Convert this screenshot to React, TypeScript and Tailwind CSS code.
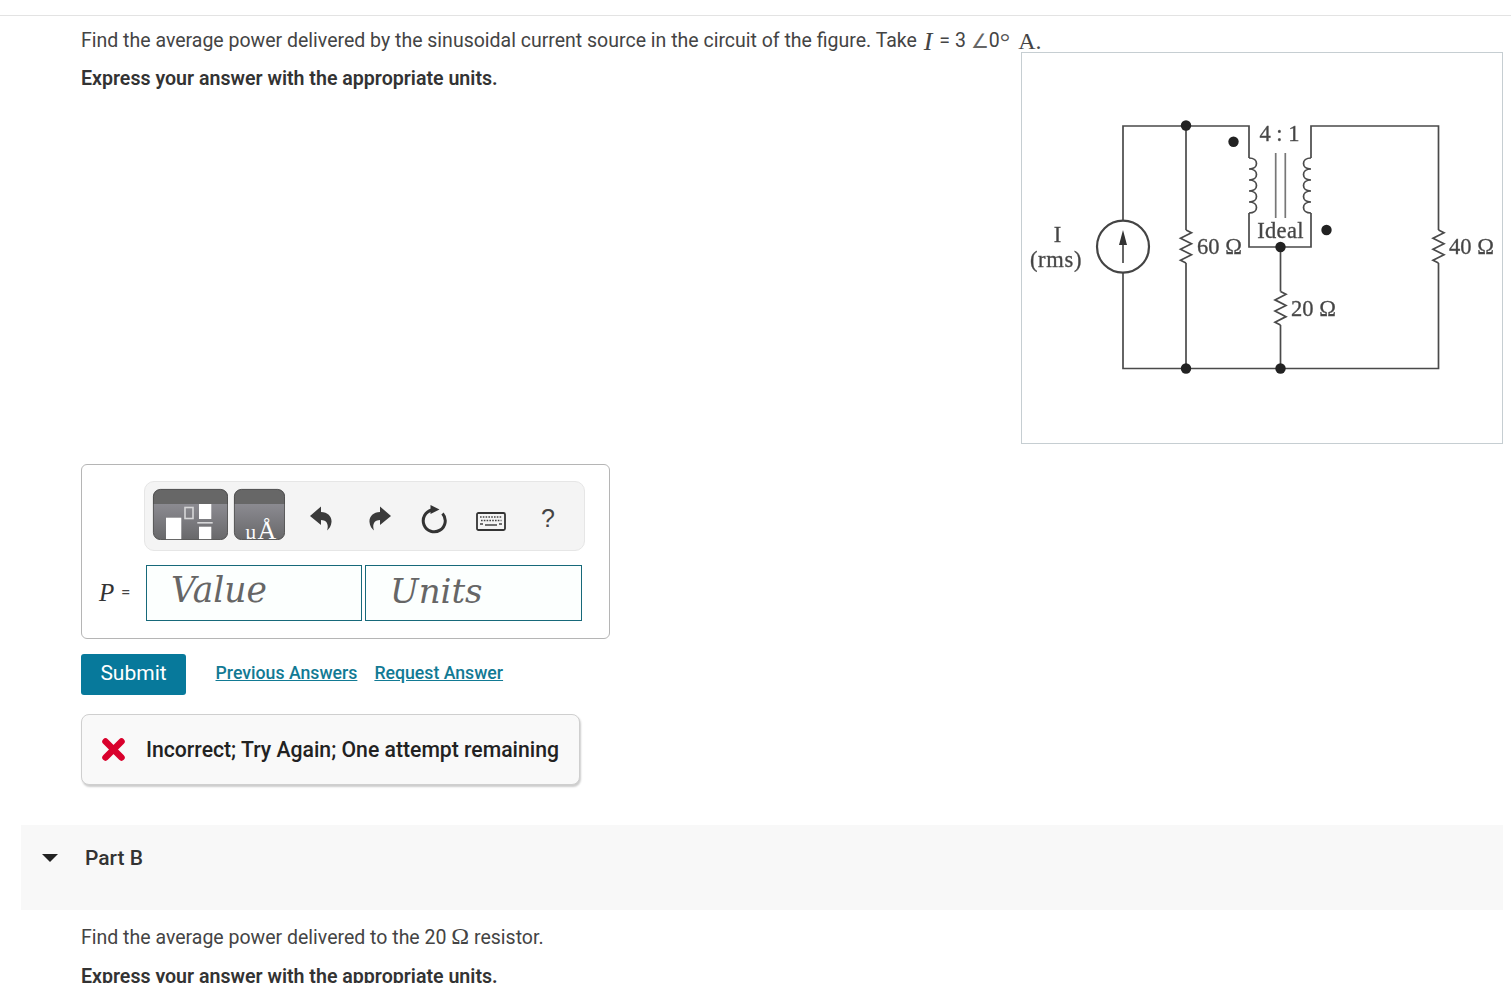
import React from "react";

const roboto = { fontFamily: "Roboto, 'Liberation Sans', sans-serif" };

function coil(x: number, dir: number) {
  const n = 5;
  const top = 158;
  const step = 55 / n;
  let d = `M${x} ${top}`;
  for (let i = 0; i < n; i++) {
    d += ` C${x + dir * 10} ${top + i * step} ${x + dir * 10} ${top + (i + 1) * step} ${x} ${top + (i + 1) * step}`;
  }
  return d;
}

function resistor(x: number, y: number, h: number) {
  const s = h / 6;
  const a = 5.5;
  return `M${x} ${y} L${x + a} ${y + s * 0.5} L${x - a} ${y + s * 1.5} L${x + a} ${y + s * 2.5} L${x - a} ${y + s * 3.5} L${x + a} ${y + s * 4.5} L${x - a} ${y + s * 5.5} L${x} ${y + h}`;
}

function Circuit() {
  const serif = "'Liberation Serif', serif";
  const text = { fontFamily: serif, fontSize: 22.5, fill: "#444", stroke: "#555", strokeWidth: 0.35 };
  return (
    <svg viewBox="1022 53 480 390" className="block w-full h-full blur-[0.4px]">
      <g fill="none" stroke="#4a4a4a" strokeWidth="1.7">
        <path d="M1123 220 V126 H1249 V158" />
        <path d="M1123 273 V368.5 H1438.5 V263" />
        <path d="M1438.5 230 V126 H1311 V158" />
        <path d="M1186 126 V230" />
        <path d="M1186 263 V368.5" />
        <path d={resistor(1186, 230, 33)} />
        <path d={resistor(1438.5, 230, 33)} />
        <path d="M1280.5 247 V291.5" />
        <path d={resistor(1280.5, 291.5, 33.5)} />
        <path d="M1280.5 325 V368.5" />
        <path d={coil(1249, 1)} />
        <path d={coil(1311, -1)} />
        <path d="M1249 213 V247 H1311 V213" />
        <path d="M1275.7 153 V218 M1285.3 153 V218" stroke="#777" />
        <circle cx="1123" cy="246.7" r="26" strokeWidth="2.2" stroke="#444" />
        <path d="M1123 263 V240" />
      </g>
      <path d="M1123 230 L1127 245 H1119 Z" fill="#333" />
      <g fill="#222">
        <circle cx="1186" cy="125.5" r="5.2" />
        <circle cx="1186" cy="368.5" r="5.2" />
        <circle cx="1280.5" cy="368.5" r="5.2" />
        <circle cx="1280.5" cy="247" r="5.2" />
        <circle cx="1233.5" cy="141.7" r="5.2" />
        <circle cx="1326.5" cy="230" r="5.2" />
      </g>
      <g style={text}>
        <text x="1279.5" y="141" textAnchor="middle">4 : 1</text>
        <text x="1280.5" y="238" textAnchor="middle" letterSpacing="0.3">Ideal</text>
        <text x="1057.5" y="241.5" textAnchor="middle">I</text>
        <text x="1056" y="267" textAnchor="middle" letterSpacing="0.7">(rms)</text>
        <text x="1197" y="254">60 Ω</text>
        <text x="1291" y="316">20 Ω</text>
        <text x="1449" y="254">40 Ω</text>
      </g>
    </svg>
  );
}

function TemplateButton() {
  return (
    <svg width="76" height="52" viewBox="152 488 76 52" className="block">
      <defs>
        <linearGradient id="b1" x1="0" y1="0" x2="0" y2="1">
          <stop offset="0" stopColor="#9a99a1" />
          <stop offset="1" stopColor="#68686a" />
        </linearGradient>
        <clipPath id="c1">
          <rect x="153.4" y="489.4" width="74.2" height="50.2" rx="7" />
        </clipPath>
      </defs>
      <g clipPath="url(#c1)">
        <rect x="153" y="489" width="75" height="51" fill="url(#b1)" />
        <rect x="153" y="489" width="75" height="15" fill="#676767" />
        <rect x="166" y="517.7" width="15.3" height="23" fill="#fff" />
        <rect x="185" y="507.5" width="8" height="11" fill="none" stroke="#d6d6d8" strokeWidth="1.6" />
        <rect x="199" y="504" width="12.3" height="15" fill="#fff" />
        <rect x="197.3" y="522" width="15.4" height="1.6" fill="#d6d6d8" />
        <rect x="199" y="526.7" width="12.3" height="14" fill="#fff" />
      </g>
      <rect x="153.4" y="489.4" width="74.2" height="50.2" rx="7" fill="none" stroke="#3b3b3b" strokeWidth="0.8" />
    </svg>
  );
}

function UnitsButton() {
  return (
    <svg width="52" height="52" viewBox="233 488 52 52" className="block">
      <defs>
        <linearGradient id="b2" x1="0" y1="0" x2="0" y2="1">
          <stop offset="0" stopColor="#9a99a1" />
          <stop offset="1" stopColor="#68686a" />
        </linearGradient>
        <clipPath id="c2">
          <rect x="234.4" y="489.4" width="50.2" height="50.2" rx="7" />
        </clipPath>
      </defs>
      <g clipPath="url(#c2)">
        <rect x="234" y="489" width="51" height="51" fill="url(#b2)" />
        <rect x="234" y="489" width="51" height="15" fill="#676767" />
        <text x="245" y="539" fill="#fff" fontSize="20" fontFamily="'Liberation Serif', serif">µ</text>
        <text x="257.5" y="539" fill="#fff" fontSize="26" fontFamily="'Liberation Serif', serif">Å</text>
      </g>
      <rect x="234.4" y="489.4" width="50.2" height="50.2" rx="7" fill="none" stroke="#3b3b3b" strokeWidth="0.8" />
    </svg>
  );
}

function Undo({ flip }: { flip?: boolean }) {
  return (
    <svg width="22" height="25" viewBox="310 506 22 25" className={flip ? "block -scale-x-100" : "block"}>
      <path
        d="M310 516 L321 506.5 V512 C328 512 332 517 331.5 522 C331.3 526 329 529 327 530.5 C329 525 327 520 321 520 V525 Z"
        fill="#3a3a3a"
      />
    </svg>
  );
}

function Refresh() {
  return (
    <svg width="26" height="30" viewBox="422 504 26 30" className="block">
      <path d="M433 510 A11 11 0 1 0 443.5 513.5" fill="none" stroke="#333" strokeWidth="3" />
      <path d="M431.5 505 L440.5 509.5 L431.5 514 Z" fill="#333" />
    </svg>
  );
}

function Keyboard() {
  return (
    <svg width="30" height="19" viewBox="0 0 30 19" className="block">
      <rect x="1" y="1" width="28" height="17" rx="1.5" fill="#f4f4f4" stroke="#333" strokeWidth="1.8" />
      <path d="M4 5 H26" stroke="#444" strokeWidth="1.6" strokeDasharray="1.6 1.2" />
      <path d="M5 8.5 H25.5" stroke="#444" strokeWidth="1.6" strokeDasharray="1.6 1.2" />
      <path d="M4 12 H7 M9 13 H21 M23 12 H26" stroke="#444" strokeWidth="1.6" />
    </svg>
  );
}

export default function App() {
  return (
    <div className="h-screen overflow-hidden bg-white text-[#444]" style={roboto}>
      <div className="h-[16px] border-b border-[#e3e3e3]" />

      <p className="ml-[81px] h-[36px] pt-[14px] flex items-center text-[19.5px] font-normal whitespace-nowrap text-[#444]">
        Find the average power delivered by the sinusoidal current source in the circuit of the figure. Take&nbsp;
        <span className="ml-[2px] text-[26px] italic font-normal" style={{ fontFamily: "'Liberation Serif', serif" }}>I</span>
        <span className="ml-[7px]">= 3</span>
        <span className="ml-[5px] text-[20px] text-[#666]" style={{ fontFamily: "'Liberation Serif', serif" }}>∠</span>
        <span>0</span>
        <span className="text-[26px] text-[#555]" style={{ fontFamily: "'Liberation Serif', serif" }}>°</span>
        <span className="ml-[8px] text-[24px]" style={{ fontFamily: "'Liberation Serif', serif" }}>A.</span>
      </p>

      <div className="flex items-start">
        <div className="w-[1021px] shrink-0 pl-[81px]">
          <p className="mt-[15px] text-[19.6px] leading-[24px] font-semibold text-[#333]">
            Express your answer with the appropriate units.
          </p>

          <div className="mt-[373px] w-[529px] h-[175px] rounded-[6px] border border-[#b5b5b5] pt-[16px] pl-[62px]">
            <div className="w-[441px] h-[70px] rounded-[10px] border border-[#e6e6e6] bg-[#f4f4f4] flex items-start pt-[6px] pl-[7px]">
              <TemplateButton />
              <div className="ml-[5px]"><UnitsButton /></div>
              <div className="ml-[25px] mt-[18px]"><Undo /></div>
              <div className="ml-[37px] mt-[18px]"><Undo flip /></div>
              <div className="ml-[30px] mt-[16px]"><Refresh /></div>
              <div className="ml-[29px] mt-[24px]"><Keyboard /></div>
              <div className="ml-[35px] mt-[12px] text-[25px] leading-[36px] text-[#444]" style={{ fontFamily: "'Liberation Sans', sans-serif" }}>?</div>
            </div>
            <div className="flex items-center mt-[14px] -ml-[45px] h-[56px]">
              <span className="w-[22px] text-[25px] italic text-[#333]" style={{ fontFamily: "'Liberation Serif', serif" }}>P</span>
              <span className="w-[25px] text-[17px] text-[#444]">=</span>
              <div className="w-[216px] h-[56px] border border-[#17697a] bg-[#fcfffe] pl-[24px] pb-[4px] flex items-center">
                <span className="text-[34.5px] italic text-[#666]" style={{ fontFamily: "'DejaVu Serif', serif" }}>Value</span>
              </div>
              <div className="ml-[3px] w-[217px] h-[56px] border border-[#17697a] bg-[#fcfffe] pl-[24px] pb-[4px] flex items-center">
                <span className="text-[34px] italic text-[#666]" style={{ fontFamily: "'DejaVu Serif', serif" }}>Units</span>
              </div>
            </div>
          </div>

          <div className="mt-[15px] flex items-start h-[41px]">
            <div className="w-[105px] h-[41px] pb-[2px] rounded-[3px] bg-[#07799b] text-white text-[21px] flex items-center justify-center">Submit</div>
            <a className="ml-[29.5px] mt-[6px] text-[17.7px] leading-[26px] font-medium underline text-[#127a94]">Previous Answers</a>
            <a className="ml-[17px] mt-[6px] text-[17.7px] leading-[26px] font-medium underline text-[#127a94]">Request Answer</a>
          </div>

          <div className="mt-[19px] w-[499px] h-[71px] rounded-[8px] border border-[#cfcfcf] bg-[#f9f9f9] shadow-[1px_2px_2px_rgba(0,0,0,0.2)] flex items-center pl-[20px]">
            <svg width="23" height="23" viewBox="0 0 23 23" className="block">
              <path d="M3.5 3.5 L19.5 19.5 M19.5 3.5 L3.5 19.5" stroke="#d9012c" strokeWidth="6.5" strokeLinecap="round" />
            </svg>
            <span className="ml-[21px] mt-[1px] text-[21.2px] font-medium text-[#222] whitespace-nowrap">Incorrect; Try Again; One attempt remaining</span>
          </div>
        </div>

        <div className="w-[482px] h-[392px] shrink-0 border border-[#c6ced2]">
          <Circuit />
        </div>
      </div>

      <div className="mt-[40px] ml-[21px] w-[1482px] h-[85px] bg-[#f8f8f8] flex items-start pt-[20px]">
        <div className="ml-[21px] mt-[9px] w-0 h-0 border-l-[8px] border-r-[8px] border-t-[8px] border-l-transparent border-r-transparent border-t-[#222]" />
        <span className="ml-[27px] text-[21px] leading-[26px] font-medium text-[#333]">Part B</span>
      </div>

      <p className="ml-[81px] mt-[14px] text-[19.5px] leading-[24px] font-normal text-[#444]">
        Find the average power delivered to the 20 <span style={{ fontFamily: "'Liberation Serif', serif" }} className="text-[24px]">Ω</span> resistor.
      </p>
      <p className="ml-[81px] mt-[15px] text-[19.6px] leading-[24px] font-semibold text-[#333]">
        Express your answer with the appropriate units.
      </p>
    </div>
  );
}
